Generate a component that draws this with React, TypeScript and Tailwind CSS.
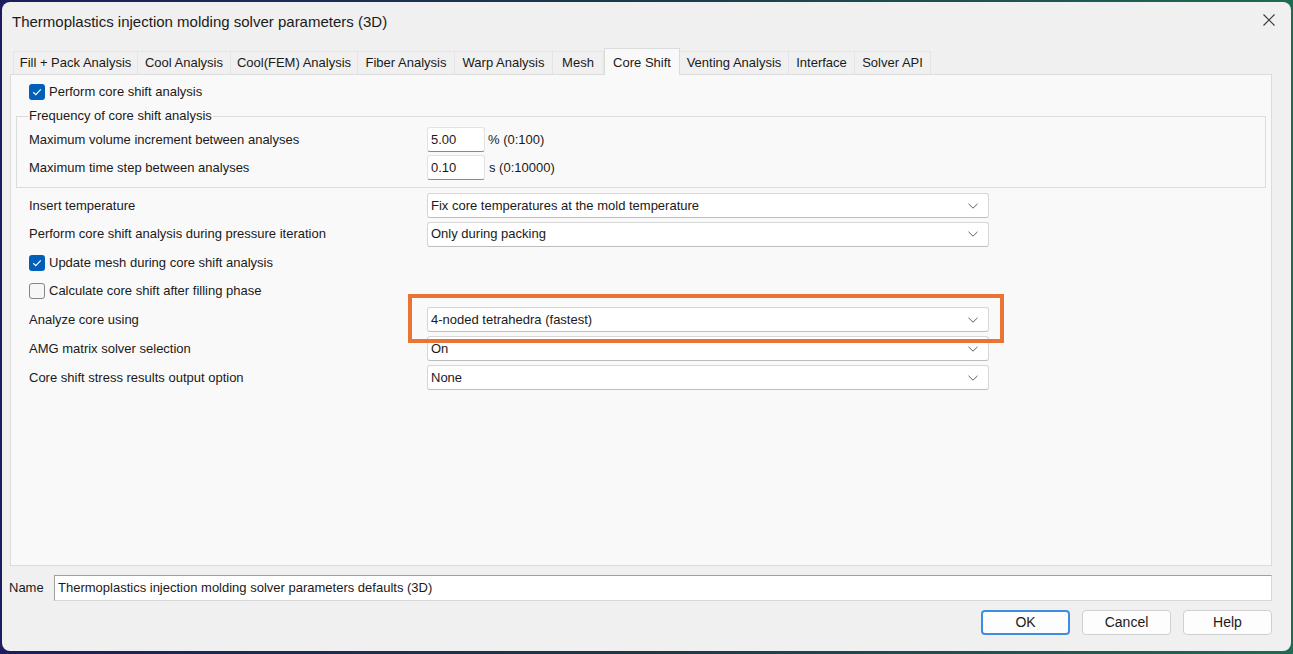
import React, { useState } from "react";

type TabDef = { label: string; width: number };

const tabs: TabDef[] = [
  { label: "Fill + Pack Analysis", width: 125 },
  { label: "Cool Analysis", width: 93 },
  { label: "Cool(FEM) Analysis", width: 127 },
  { label: "Fiber Analysis", width: 97 },
  { label: "Warp Analysis", width: 98 },
  { label: "Mesh", width: 51 },
  { label: "Core Shift", width: 76 },
  { label: "Venting Analysis", width: 109 },
  { label: "Interface", width: 66 },
  { label: "Solver API", width: 76 },
];

const font = "font-['Liberation_Sans',Arial,sans-serif]";

function Chevron() {
  return (
    <svg width="12" height="8" viewBox="0 0 12 8" className="shrink-0">
      <path d="M1.5 1.8 L6 6.2 L10.5 1.8" fill="none" stroke="#5f5f5f" strokeWidth="1" />
    </svg>
  );
}

function Checkbox({ checked }: { checked: boolean }) {
  return checked ? (
    <span className="flex h-4 w-4 items-center justify-center rounded-[3px] bg-[#005fb8]">
      <svg width="10" height="8" viewBox="0 0 10 8">
        <path d="M1.2 4.2 L3.8 6.6 L8.8 1.4" fill="none" stroke="white" strokeWidth="1.2" />
      </svg>
    </span>
  ) : (
    <span className="block h-4 w-4 rounded-[3px] border border-[#858585] bg-[#f6f6f6]" />
  );
}

function Select({ value }: { value: string }) {
  return (
    <div className="flex h-[25px] w-[562px] items-center justify-between rounded-[3px] border border-[#d6d6d6] border-b-[#bdbdbd] bg-white pl-[3px] pr-[9px] text-[13px] text-[#1a1a1a]">
      <span>{value}</span>
      <Chevron />
    </div>
  );
}

function NumberBox({ value }: { value: string }) {
  return (
    <div className="flex h-[25px] w-[58px] items-center rounded-[3px] border border-[#e2e2e2] border-b-[#8a8a8a] bg-white pl-[3px] text-[13px] text-[#1a1a1a]">
      {value}
    </div>
  );
}

export default function App() {
  const [active, setActive] = useState("Core Shift");

  const selectRows = [
    { label: "Insert temperature", value: "Fix core temperatures at the mold temperature", h: "h-[29px]" },
    {
      label: "Perform core shift analysis during pressure iteration",
      value: "Only during packing",
      h: "h-[28px]",
    },
  ];

  return (
    <div
      className={`h-[654px] w-full bg-gradient-to-r from-[#1c1c5e] via-[#1a3a4a] to-[#1f6a52] p-[2px] ${font}`}
    >
      <div className="flex h-[649px] w-[1289px] flex-col rounded-[8px] bg-[#f0f0f0] text-[#1a1a1a]">
        {/* title bar */}
        <div className="flex h-[45px] shrink-0 items-start justify-between pl-[10px] pr-[12px] pt-[9px]">
          <span className="text-[15px] text-[#1b1b1b]">
            Thermoplastics injection molding solver parameters (3D)
          </span>
          <svg width="14" height="14" viewBox="0 0 14 14" className="mr-[3px] mt-[2px]">
            <path d="M1.5 1.5 L12.5 12.5 M12.5 1.5 L1.5 12.5" stroke="#3a3a3a" strokeWidth="1.1" />
          </svg>
        </div>

        {/* tabs */}
        <div className="flex h-[27px] shrink-0 items-end pl-[11px]">
          {tabs.map((t) => {
            const on = t.label === active;
            return (
              <button
                key={t.label}
                type="button"
                onClick={() => setActive(t.label)}
                style={{ width: t.width }}
                className={
                  on
                    ? "relative z-10 -mb-px flex h-[27px] items-start justify-center border border-b-0 border-[#dcdcdc] bg-[#f9f9f9] pt-[4px] text-[13px]"
                    : "flex h-[23px] items-center justify-center border border-b-0 border-l-0 border-[#e4e4e4] bg-[#f0f0f0] text-[13px] first:border-l"
                }
              >
                {t.label}
              </button>
            );
          })}
        </div>

        {/* tab page */}
        <div className="ml-[8px] h-[492px] w-[1262px] shrink-0 border border-[#dcdcdc] bg-[#f9f9f9] text-[13px]">
          <div className="flex h-[25px] items-center gap-[4px] pl-[18px] pt-[9px]">
            <Checkbox checked />
            <span>Perform core shift analysis</span>
          </div>

          {/* frequency group */}
          <div className="relative mx-[5px] mt-[16px] h-[72px] border border-[#dcdcdc]">
            <span className="absolute -top-[9px] left-[11px] bg-[#f9f9f9] px-[1px] leading-[16px]">
              Frequency of core shift analysis
            </span>
            <div className="flex flex-col gap-[3px] pl-[12px] pt-[10px]">
              <div className="flex items-center">
                <span className="w-[398px]">Maximum volume increment between analyses</span>
                <NumberBox value="5.00" />
                <span className="ml-[3px]">% (0:100)</span>
              </div>
              <div className="flex items-center">
                <span className="w-[398px]">Maximum time step between analyses</span>
                <NumberBox value="0.10" />
                <span className="ml-[4px]">s (0:10000)</span>
              </div>
            </div>
          </div>

          <div className="mt-[3px] flex flex-col pl-[18px]">
            {selectRows.map((r) => (
              <div key={r.label} className={`flex items-center ${r.h}`}>
                <span className="w-[398px]">{r.label}</span>
                <Select value={r.value} />
              </div>
            ))}
            <div className="flex h-[29px] items-center gap-[4px]">
              <Checkbox checked />
              <span>Update mesh during core shift analysis</span>
            </div>
            <div className="flex h-[28px] items-center gap-[4px]">
              <Checkbox checked={false} />
              <span>Calculate core shift after filling phase</span>
            </div>
            <div className="flex h-[29px] items-center">
              <span className="w-[398px]">Analyze core using</span>
              <div className="relative">
                <Select value="4-noded tetrahedra (fastest)" />
                <div className="pointer-events-none absolute -bottom-[11px] -left-[19px] -right-[15px] -top-[13px] border-4 border-[#ea7434]" />
              </div>
            </div>
            <div className="flex h-[29px] items-center">
              <span className="w-[398px]">AMG matrix solver selection</span>
              <Select value="On" />
            </div>
            <div className="flex h-[29px] items-center">
              <span className="w-[398px]">Core shift stress results output option</span>
              <Select value="None" />
            </div>
          </div>
        </div>

        {/* name */}
        <div className="mt-[9px] flex items-center pl-[7px] text-[13px]">
          <span className="w-[45px]">Name</span>
          <div className="flex h-[26px] w-[1218px] items-center border border-[#a0a0a0] border-b-[#d8d8d8] border-r-[#d8d8d8] bg-white pl-[3px]">
            Thermoplastics injection molding solver parameters defaults (3D)
          </div>
        </div>

        {/* buttons */}
        <div className="mt-[9px] flex justify-end gap-[12px] pr-[19px] text-[14px]">
          <button
            type="button"
            className="h-[25px] w-[89px] rounded-[4px] border-2 border-[#3d8ee0] bg-[#fdfdfd]"
          >
            OK
          </button>
          <button
            type="button"
            className="h-[25px] w-[89px] rounded-[4px] border border-[#d0d0d0] bg-[#fdfdfd]"
          >
            Cancel
          </button>
          <button
            type="button"
            className="h-[25px] w-[89px] rounded-[4px] border border-[#d0d0d0] bg-[#fdfdfd]"
          >
            Help
          </button>
        </div>
      </div>
    </div>
  );
}
